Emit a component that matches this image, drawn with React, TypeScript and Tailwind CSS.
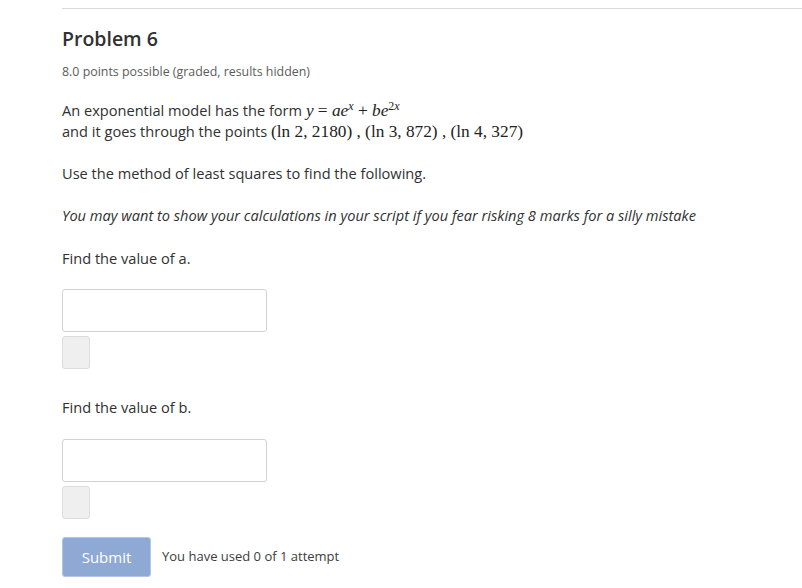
const sans = { fontFamily: '"Open Sans", "Noto Sans", sans-serif' };

function M({ children }: { children: React.ReactNode }) {
  return (
    <span className="font-['Liberation_Serif','DejaVu_Serif',serif] text-[17.3px] leading-[18px] text-[#222]">
      {children}
    </span>
  );
}

function V({ children }: { children: React.ReactNode }) {
  return <i>{children}</i>;
}

function AnswerField() {
  return (
    <div className="flex flex-col gap-[4px]">
      <div className="h-[43px] w-[205px] rounded-[3px] border border-[#d2d2d2] bg-white" />
      <div className="h-[33px] w-[28px] rounded-[3px] border border-[#dcdcdc] bg-[#efefef]" />
    </div>
  );
}

export default function App() {
  return (
    <div className="min-h-[588px] bg-white pl-[62px] pt-[8px] text-[#313131]" style={sans}>
      <div className="border-t border-[#d9d9d9]" />
      <h3 className="mt-[17px] text-[19.5px] font-semibold leading-[26px] text-[#313131]">Problem 6</h3>
      <div className="mt-[12px] text-[12.4px] leading-[16px] text-[#5c5c5c]">
        8.0 points possible (graded, results hidden)
      </div>
      <div className="mt-[20px] text-[14.6px] leading-[21px]">
        <div>
          An exponential model has the form{" "}
          <M>
            <V>y</V> = <V>ae</V>
            <sup className="text-[12px]">
              <V>x</V>
            </sup>{" "}
            + <V>be</V>
            <sup className="text-[12px]">
              2<V>x</V>
            </sup>
          </M>
        </div>
        <div>
          and it goes through the points{" "}
          <M>(ln 2, 2180) , (ln 3, 872) , (ln 4, 327)</M>
        </div>
      </div>
      <p className="mt-[21px] text-[14.6px] leading-[21px]">Use the method of least squares to find the following.</p>
      <p className="mt-[21px] text-[14.6px] italic leading-[21px]">
        You may want to show your calculations in your script if you fear risking 8 marks for a silly mistake
      </p>
      <p className="mt-[22px] text-[14.6px] leading-[21px]">Find the value of a.</p>
      <div className="mt-[20px]">
        <AnswerField />
      </div>
      <p className="mt-[28px] text-[14.6px] leading-[21px]">Find the value of b.</p>
      <div className="mt-[21px]">
        <AnswerField />
      </div>
      <div className="mt-[18px] flex items-center gap-[11px]">
        <button className="h-[40px] w-[89px] rounded-[3px] border border-[#b5c6e4] bg-[#8fa9d5] text-[15px] text-white">
          Submit
        </button>
        <span className="text-[13px] text-[#3c3c3c]">You have used 0 of 1 attempt</span>
      </div>
    </div>
  );
}
